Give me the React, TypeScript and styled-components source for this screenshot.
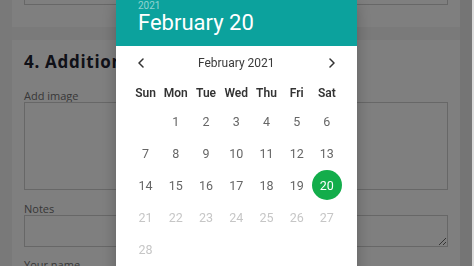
import React from "react";
import styled, { createGlobalStyle } from "styled-components";

const GlobalStyle = createGlobalStyle`
  html, body { margin: 0; padding: 0; }
  body {
    width: 474px;
    height: 266px;
    overflow: hidden;
    background: #f4f4f4;
    font-family: "Open Sans", "Liberation Sans", sans-serif;
  }
`;

const Page = styled.div`
  display: grid;
  grid-template-columns: 12px 448px 12px 2px;
  height: 266px;
  overflow: hidden;
  background: #f4f4f4;
`;

const Gutter = styled.div<{ $tone: string }>`
  background: ${(p) => p.$tone};
`;

const Content = styled.div`
  display: flex;
  flex-direction: column;
  gap: 13px;
  margin-top: -26px;
`;

const Card = styled.section<{ $pad: string }>`
  background: #ffffff;
  padding: ${(p) => p.$pad};
  display: flex;
  flex-direction: column;
`;

const Heading = styled.h2`
  margin: 0;
  font-family: "Open Sans", sans-serif;
  font-weight: 700;
  font-size: 17px;
  line-height: 20px;
  letter-spacing: 0.7px;
  color: #1f2230;
`;

const Label = styled.label<{ $gap: number }>`
  display: block;
  margin-top: ${(p) => p.$gap}px;
  font-size: 11px;
  line-height: 13px;
  color: #707070;
`;

const ImageBox = styled.div<{ $h: number }>`
  height: ${(p) => p.$h}px;
  box-sizing: border-box;
  border: 1px solid #cfcfcf;
  background: #ffffff;
`;

const TextArea = styled.textarea<{ $h: number }>`
  display: block;
  height: ${(p) => p.$h}px;
  width: 100%;
  box-sizing: border-box;
  border: 1px solid #cfcfcf;
  background: #ffffff;
  padding: 4px;
  margin: 0;
  font-family: inherit;
`;

const Backdrop = styled.div`
  position: fixed;
  top: 0;
  left: 0;
  bottom: 0;
  right: 2px;
  background: rgba(0, 0, 0, 0.5);
`;

const Dialog = styled.div`
  position: fixed;
  top: 0;
  left: 116px;
  width: 241px;
  height: 290px;
  background: #ffffff;
  box-shadow: 0 4px 14px rgba(0, 0, 0, 0.25);
  display: flex;
  flex-direction: column;
  font-family: Roboto, "Liberation Sans", sans-serif;
`;

const Header = styled.div`
  height: 46px;
  box-sizing: border-box;
  background: #0ca29d;
  padding: 0 22px;
  display: flex;
  flex-direction: column;
`;

const Year = styled.div`
  font-size: 10px;
  line-height: 12px;
  color: rgba(255, 255, 255, 0.55);
`;

const Title = styled.div`
  font-size: 22px;
  line-height: 20px;
  color: #ffffff;
  margin-top: 0.5px;
`;

const Body = styled.div`
  padding: 0 15px 0 14.5px;
  display: flex;
  flex-direction: column;
`;

const NavRow = styled.div`
  height: 34px;
  display: flex;
  align-items: center;
  justify-content: space-between;
`;

const NavButton = styled.button`
  width: 20px;
  height: 20px;
  padding: 0;
  border: none;
  background: transparent;
  display: flex;
  align-items: center;
  justify-content: center;
`;

const MonthLabel = styled.div`
  font-size: 12px;
  color: #3a3a3a;
`;

const WeekRow = styled.div`
  display: grid;
  grid-template-columns: repeat(7, 1fr);
  height: 25px;
  align-items: center;
`;

const WeekDay = styled.div`
  text-align: center;
  font-size: 12px;
  font-weight: 600;
  color: #333333;
`;

const DayGrid = styled.div`
  display: grid;
  grid-template-columns: repeat(7, 1fr);
  grid-auto-rows: 32px;
`;

const Day = styled.div<{ $muted?: boolean; $selected?: boolean }>`
  justify-self: center;
  align-self: center;
  width: 30px;
  height: 30px;
  border-radius: 50%;
  display: flex;
  align-items: center;
  justify-content: center;
  font-size: 12.5px;
  color: ${(p) => (p.$selected ? "#ffffff" : p.$muted ? "#c6c6c6" : "#666666")};
  background: ${(p) => (p.$selected ? "#13ad4b" : "transparent")};
`;

const Chevron = ({ dir }: { dir: "left" | "right" }) => (
  <svg width="8" height="10" viewBox="0 0 8 10">
    <path
      d={dir === "left" ? "M6 1 L2 5 L6 9" : "M2 1 L6 5 L2 9"}
      fill="none"
      stroke="#333"
      strokeWidth="1.5"
      strokeLinecap="round"
      strokeLinejoin="round"
    />
  </svg>
);

const weekdays = ["Sun", "Mon", "Tue", "Wed", "Thu", "Fri", "Sat"];
const leading = 1;
const days = Array.from({ length: 28 }, (_, i) => i + 1);

export default function App() {
  return (
    <>
      <GlobalStyle />
      <Page>
        <Gutter $tone="#f2f2f2" />
        <Content>
          <Card $pad="0 12px 22px">
            <ImageBox $h={31} />
          </Card>
          <Card $pad="12px 12px 0">
            <Heading>4. Additional information</Heading>
            <Label $gap={17}>Add image</Label>
            <ImageBox $h={88} />
            <Label $gap={12}>Notes</Label>
            <TextArea $h={32} />
            <Label $gap={11}>Your name</Label>
          </Card>
        </Content>
        <Gutter $tone="#ebebeb" />
        <Gutter $tone="#dcdcdc" />
      </Page>
      <Backdrop />
      <Dialog>
        <Header>
          <Year>2021</Year>
          <Title>February 20</Title>
        </Header>
        <Body>
          <NavRow>
            <NavButton aria-label="Previous month">
              <Chevron dir="left" />
            </NavButton>
            <MonthLabel>February 2021</MonthLabel>
            <NavButton aria-label="Next month">
              <Chevron dir="right" />
            </NavButton>
          </NavRow>
          <WeekRow>
            {weekdays.map((w) => (
              <WeekDay key={w}>{w}</WeekDay>
            ))}
          </WeekRow>
          <DayGrid>
            {Array.from({ length: leading }, (_, i) => (
              <div key={`e${i}`} />
            ))}
            {days.map((d) => (
              <Day key={d} $muted={d > 20} $selected={d === 20}>
                {d}
              </Day>
            ))}
          </DayGrid>
        </Body>
      </Dialog>
    </>
  );
}
